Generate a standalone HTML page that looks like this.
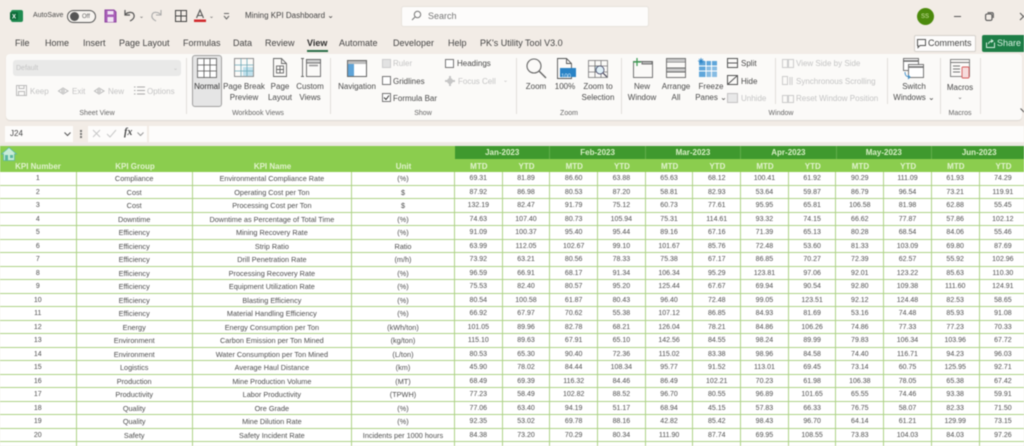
<!DOCTYPE html>
<html lang="en"><head><meta charset="utf-8"><title>Mining KPI Dashboard</title>
<style>
*{box-sizing:border-box}
html,body{margin:0;padding:0;width:1024px;height:446px;overflow:hidden;background:#f2ece6}
#w{position:relative;width:1024px;height:446px;overflow:hidden;font-family:"Liberation Sans",sans-serif;color:#444;filter:blur(.45px)}
.t{position:absolute;white-space:nowrap;line-height:10px;font-size:8px;color:#4a4a4a}
.c{transform:translateX(-50%);text-align:center}
.tab{font-size:9px;top:38px;color:#444}
.g{color:#c4c4c4}
.l{font-size:7px;color:#666;top:109px}
.b{position:absolute}
svg{position:absolute;overflow:visible}
#grid{position:absolute;left:0;top:172px;width:1028px;display:grid;grid-template-columns:76.6px 116.2px 159.2px 103px repeat(12,47.7px);grid-auto-rows:13.53px;font-size:7px;color:#4d4d4d;background:#fff}
#grid div{border-right:1px solid #aed387;border-bottom:1px solid #aed387;text-align:center;line-height:14px;white-space:nowrap;overflow:hidden}
#grid div.n{font-size:7.3px}
#hd{position:absolute;left:0;top:146px;width:1024px;height:26px;background:#8bcd4e}
.m{position:absolute;top:146px;height:13px;background:#3f992e;color:#d9efc6;font-size:8px;font-weight:bold;line-height:14px;text-align:center;width:95.4px;border-right:1px solid #62ad4b}
.h{position:absolute;top:159px;height:13px;color:#e2f3cf;font-size:8px;font-weight:bold;line-height:15px;text-align:center}
</style></head><body><div id="w">

<!-- Title bar -->
<svg style="left:10px;top:9px" width="14" height="14" viewBox="0 0 14 14"><rect x="1" y="1" width="12" height="12" rx="2" fill="#1f8a50"/><rect x="0" y="3" width="8" height="8" rx="1" fill="#0d6b38"/><text x="2" y="9.500" font-size="6" font-weight="bold" fill="#fff" font-family="Liberation Sans">X</text></svg>
<span class="t" style="left:33px;top:11px;font-size:7px">AutoSave</span>
<div class="b" style="left:67px;top:10px;width:29px;height:13px;border:1px solid #555;border-radius:7px;background:#f7f4f0"></div>
<div class="b" style="left:70px;top:12px;width:9px;height:9px;border-radius:50%;background:#555"></div>
<span class="t" style="left:82px;top:12px;font-size:6px;color:#666">Off</span>
<svg style="left:104px;top:9px" width="13" height="14" viewBox="0 0 13 14"><path d="M1 1h9l2 2v10H1z" fill="#a960b8" stroke="#8e46a0"/><rect x="3.500" y="2" width="6" height="3.500" fill="#f0e4f3"/><rect x="3.500" y="8" width="6" height="5" fill="#f0e4f3"/></svg>
<svg style="left:123px;top:9px" width="14" height="13" viewBox="0 0 14 13" fill="none" stroke="#555" stroke-width="1.200"><path d="M2 1v5h5M2 6c2-3 8-4 9 0 .8 3-2 5-4 6"/></svg>
<span class="t" style="left:139px;top:12px;font-size:6px;color:#666">⌄</span>
<svg style="left:149px;top:9px" width="14" height="13" viewBox="0 0 14 13" fill="none" stroke="#aaa" stroke-width="1.100"><path d="M12 1v5H7M12 6c-2-3-8-4-9 0-.8 3 2 5 4 6"/></svg>
<svg style="left:175px;top:10px" width="12" height="12" viewBox="0 0 12 12" fill="none" stroke="#444" stroke-width="1"><rect x=".5" y=".5" width="11" height="11"/><path d="M6 .5v11M.5 6h11"/></svg>
<svg style="left:194px;top:9px" width="12" height="13" viewBox="0 0 12 13"><path d="M2.500 9L6 1l3.500 8M4 6.500h4" fill="none" stroke="#555" stroke-width="1.100"/><rect x="0" y="10.500" width="12" height="2.500" fill="#d0282c"/></svg>
<span class="t" style="left:209px;top:12px;font-size:6px;color:#666">⌄</span>
<svg style="left:223px;top:13px" width="7" height="7" viewBox="0 0 7 7" fill="none" stroke="#666"><path d="M1 .5h5M1 3l2.500 3L6 3"/></svg>
<span class="t" style="left:245px;top:11px;font-size:8px;color:#444">Mining KPI Dashboard ⌄</span>
<div class="b" style="left:401px;top:6px;width:248px;height:21px;background:#fdfcfb;border:1px solid #e7e2dc;border-radius:3px"></div>
<svg style="left:411px;top:10px" width="11" height="11" viewBox="0 0 11 11" fill="none" stroke="#777"><circle cx="6.500" cy="4.500" r="3.200"/><path d="M4 7L1 10"/></svg>
<span class="t" style="left:428px;top:11px;font-size:9px;color:#777">Search</span>
<div class="b" style="left:917px;top:8px;width:17px;height:17px;border-radius:50%;background:#4c8a0c"></div>
<span class="t c" style="left:925px;top:12px;font-size:6px;color:#cfe6a8">SS</span>
<div class="b" style="left:954px;top:16px;width:7px;height:1px;background:#555"></div>
<svg style="left:985px;top:12px" width="9" height="9" viewBox="0 0 9 9" fill="none" stroke="#555" stroke-width="1.100"><rect x=".6" y="2" width="6.400" height="6.400" rx="1.500"/><path d="M2.500.7h4.500a1.500 1.500 0 0 1 1.300 1.300V6"/></svg>
<svg style="left:1019px;top:12px" width="9" height="9" viewBox="0 0 9 9" stroke="#555"><path d="M1 1l7 7M8 1L1 8"/></svg>

<!-- Tabs -->
<span class="t tab" style="left:15px">File</span>
<span class="t tab" style="left:45px">Home</span>
<span class="t tab" style="left:83px">Insert</span>
<span class="t tab" style="left:119px">Page Layout</span>
<span class="t tab" style="left:183px">Formulas</span>
<span class="t tab" style="left:233px">Data</span>
<span class="t tab" style="left:265px">Review</span>
<span class="t tab" style="left:307px;font-weight:bold;color:#2f2f2f">View</span>
<span class="t tab" style="left:339px">Automate</span>
<span class="t tab" style="left:393px">Developer</span>
<span class="t tab" style="left:448px">Help</span>
<span class="t tab" style="left:480px">PK's Utility Tool V3.0</span>
<div class="b" style="left:307px;top:50px;width:21px;height:2px;background:#2a6e48"></div>
<div class="b" style="left:914px;top:35px;width:62px;height:17px;background:#fdfcfb;border:1px solid #d4d0cb;border-radius:2px"></div>
<svg style="left:917px;top:39px" width="9" height="9" viewBox="0 0 9 9" fill="none" stroke="#555"><path d="M.5.500h8v6H3L1 8.500V6.500H.5z"/></svg>
<span class="t" style="left:928px;top:38px;font-size:9px;color:#444">Comments</span>
<div class="b" style="left:982px;top:35px;width:44px;height:17px;background:#1d7d46;border-radius:2px"></div>
<span class="t" style="left:997px;top:38px;font-size:9px;color:#d7efe0">Share</span>
<svg style="left:986px;top:39px" width="9" height="9" viewBox="0 0 9 9" fill="none" stroke="#d7efe0"><path d="M.5 3.500v5h8v-5M2.500 5c0-2 2-3 4-3M5 .5l2 1.500-2 1.500"/></svg>

<!-- Ribbon -->
<div class="b" style="left:6px;top:54px;width:1016px;height:66px;background:#fbfaf8;border-radius:4px;box-shadow:0 1px 1px #ddd8d2"></div>
<div class="b" style="left:13px;top:60px;width:168px;height:16px;background:#e9e9e8;border-radius:3px"></div>
<span class="t g" style="left:16px;top:64px;font-size:7px">Default</span>
<span class="t g" style="left:173px;top:64px;font-size:6px">⌄</span>
<svg style="left:16px;top:85px" width="11" height="11" viewBox="0 0 11 11" fill="none" stroke="#bbb"><rect x=".5" y=".5" width="10" height="10"/><path d="M3 .5v3h5v-3M2.500 10.500v-4h6v4"/></svg>
<span class="t g" style="left:30px;top:87px">Keep</span>
<svg style="left:58px;top:87px" width="11" height="8" viewBox="0 0 11 8" fill="none" stroke="#bbb"><path d="M.5 4L5 1l5 3-5 3z"/><circle cx="5" cy="4" r="1.200"/></svg>
<span class="t g" style="left:72px;top:87px">Exit</span>
<svg style="left:94px;top:87px" width="11" height="8" viewBox="0 0 11 8" fill="none" stroke="#bbb"><path d="M.5 4L5 1l5 3-5 3z"/><circle cx="5" cy="4" r="1.200"/></svg>
<span class="t g" style="left:108px;top:87px">New</span>
<svg style="left:134px;top:86px" width="11" height="9" viewBox="0 0 11 9" stroke="#aaa"><path d="M0 1h1.500M0 4.500h1.500M0 8h1.500M3 1h8M3 4.500h8M3 8h8"/></svg>
<span class="t g" style="left:147px;top:87px">Options</span>
<span class="t c l" style="left:97px">Sheet View</span>
<div class="b" style="left:186px;top:58px;width:1px;height:56px;background:#e2dfdb"></div>

<div class="b" style="left:192px;top:55px;width:30px;height:52px;background:#e5e5e5;border:1px solid #a0a0a0;border-radius:3px"></div>
<svg style="left:197px;top:58px" width="20" height="20" viewBox="0 0 20 20" fill="#fff" stroke="#555" stroke-width=".8"><rect x=".5" y=".5" width="19" height="19"/><path d="M.5 7h19M.5 13h19M7 .5v19M13 .5v19" fill="none"/></svg>
<span class="t c" style="left:207px;top:82px;color:#333">Normal</span>
<svg style="left:234px;top:58px" width="20" height="19" viewBox="0 0 20 19" fill="none" stroke="#777" stroke-width=".8"><rect x=".5" y=".5" width="19" height="18"/><rect x="9" y="9" width="10" height="9" fill="#bfe0ec" stroke="none"/><path d="M.5 7h19M.5 13h19M7 .5v18M13 .5v18" stroke="#6ea9b7"/></svg>
<span class="t c" style="left:244px;top:82px">Page Break</span><span class="t c" style="left:244px;top:93px">Preview</span>
<svg style="left:273px;top:58px" width="14" height="19" viewBox="0 0 14 19" fill="none" stroke="#666" stroke-width=".9"><path d="M.5.500h8l5 5v13H.5zM8.500.5v5h5"/><rect x="3.500" y="8" width="7" height="7"/><path d="M3.500 11.500h7M7 8v7"/></svg>
<span class="t c" style="left:280px;top:82px">Page</span><span class="t c" style="left:280px;top:93px">Layout</span>
<svg style="left:301px;top:58px" width="20" height="19" viewBox="0 0 20 19" fill="none" stroke="#666" stroke-width=".9"><path d="M0 .5h3M1.500.5v18M0 18.500h3"/><rect x="5.500" y="1.500" width="14" height="17"/><rect x="5.500" y="1.500" width="14" height="3.500" fill="#cfcfcf"/><path d="M8 7.500h9" stroke="#999" stroke-width="1.600"/></svg>
<span class="t c" style="left:310px;top:82px">Custom</span><span class="t c" style="left:310px;top:93px">Views</span>
<span class="t c l" style="left:258px">Workbook Views</span>
<div class="b" style="left:330px;top:58px;width:1px;height:56px;background:#e2dfdb"></div>

<svg style="left:347px;top:60px" width="20" height="17" viewBox="0 0 20 17"><rect x=".5" y=".5" width="19" height="16" fill="#fff" stroke="#666"/><rect x="1" y="1" width="18" height="3" fill="#bdbdbd"/><rect x="1" y="4" width="6" height="12" fill="#5fa4d8"/></svg>
<span class="t c" style="left:357px;top:82px">Navigation</span>
<div class="b" style="left:382px;top:59px;width:9px;height:9px;background:#e2e2e2;border:1px solid #ccc"></div>
<span class="t g" style="left:393px;top:59px">Ruler</span>
<div class="b" style="left:382px;top:76px;width:9px;height:9px;background:#fff;border:1px solid #777"></div>
<span class="t" style="left:393px;top:77px">Gridlines</span>
<div class="b" style="left:382px;top:93px;width:9px;height:9px;background:#fff;border:1px solid #777"></div>
<svg style="left:383px;top:94px" width="7" height="7" viewBox="0 0 7 7" fill="none" stroke="#333"><path d="M1 3.500l2 2 3-4"/></svg>
<span class="t" style="left:393px;top:94px">Formula Bar</span>
<div class="b" style="left:445px;top:59px;width:9px;height:9px;background:#fff;border:1px solid #777"></div>
<span class="t" style="left:457px;top:59px">Headings</span>
<svg style="left:445px;top:76px" width="10" height="10" viewBox="0 0 10 10" fill="#c6c6c6"><circle cx="5" cy="5" r="3"/><rect x="4" width="2" height="10"/><rect y="4" width="10" height="2"/></svg>
<span class="t g" style="left:458px;top:77px">Focus Cell</span>
<span class="t g" style="left:503px;top:76px;font-size:6px">⌄</span>
<span class="t c l" style="left:423px">Show</span>
<div class="b" style="left:516px;top:58px;width:1px;height:56px;background:#e2dfdb"></div>

<svg style="left:526px;top:58px" width="21" height="21" viewBox="0 0 21 21" fill="none" stroke="#666" stroke-width="1.100"><circle cx="8" cy="8" r="7"/><path d="M13 13l7 7" stroke-width="1.400"/></svg>
<span class="t c" style="left:536px;top:82px">Zoom</span>
<svg style="left:557px;top:58px" width="19" height="21" viewBox="0 0 19 21" fill="none" stroke="#555" stroke-width=".9"><path d="M.5.500h9l5 5v15H.5zM9.500.5v5h5"/><rect x="3" y="10" width="16" height="9" fill="#2a83c5" stroke="none"/></svg>
<span class="t" style="left:561px;top:72px;font-size:6px;color:#d6ebfa">100</span>
<span class="t c" style="left:565px;top:82px">100%</span>
<svg style="left:588px;top:60px" width="20" height="18" viewBox="0 0 20 18" fill="none" stroke="#777" stroke-width=".8"><rect x=".5" y=".5" width="19" height="17"/><path d="M.5 6h19M.5 12h19M7 .5v17M13 .5v17"/><rect x="7" y="6" width="6" height="6" fill="#bfe0ec"/><circle cx="12" cy="10" r="4" stroke="#446" fill="#dff0f7"/><path d="M15 13l4 4" stroke="#445" stroke-width="1.200"/></svg>
<span class="t c" style="left:598px;top:82px">Zoom to</span><span class="t c" style="left:598px;top:93px">Selection</span>
<span class="t c l" style="left:569px">Zoom</span>
<div class="b" style="left:621px;top:58px;width:1px;height:56px;background:#e2dfdb"></div>

<svg style="left:632px;top:58px" width="21" height="20" viewBox="0 0 21 20" fill="none" stroke="#666" stroke-width=".9"><rect x="1.500" y="3.500" width="19" height="16"/><rect x="10" y="3.500" width="10" height="2.500" fill="#bbb"/><path d="M5 0v8M1 4h8" stroke="#3a9a50" stroke-width="1.200"/></svg>
<span class="t c" style="left:642px;top:82px">New</span><span class="t c" style="left:642px;top:93px">Window</span>
<svg style="left:666px;top:58px" width="20" height="20" viewBox="0 0 20 20" fill="none" stroke="#666" stroke-width=".9"><rect x=".5" y=".5" width="19" height="19"/><path d="M.5 4h19M.5 10h19M.5 14h19"/><rect x="1" y="1" width="18" height="3" fill="#c8c8c8" stroke="none"/><rect x="1" y="10.500" width="18" height="3" fill="#c8c8c8" stroke="none"/></svg>
<span class="t c" style="left:676px;top:82px">Arrange</span><span class="t c" style="left:676px;top:93px">All</span>
<svg style="left:698px;top:58px" width="20" height="20" viewBox="0 0 20 20"><rect x="1" y="3" width="18" height="16" fill="#5fa6da"/><path d="M1 8h18M1 13h18M8 3v16M13.500 3v16" stroke="#fff"/><rect x="8" y="8" width="11" height="11" fill="#fff" opacity=".25"/><path d="M3 0v6M0 3h6M1 1l4 4M5 1L1 5" stroke="#2a83c5" stroke-width=".8"/></svg>
<span class="t c" style="left:711px;top:82px">Freeze</span><span class="t c" style="left:711px;top:93px">Panes ⌄</span>
<svg style="left:727px;top:58px" width="11" height="10" viewBox="0 0 11 10" fill="none" stroke="#555"><rect x=".5" y=".5" width="10" height="9"/><path d="M.5 5h10"/></svg>
<span class="t" style="left:741px;top:59px">Split</span>
<svg style="left:727px;top:75px" width="11" height="10" viewBox="0 0 11 10" fill="none" stroke="#555"><rect x=".5" y=".5" width="10" height="9"/><path d="M.5 9.500l10-9"/></svg>
<span class="t" style="left:741px;top:77px">Hide</span>
<div class="b" style="left:727px;top:93px;width:11px;height:10px;background:#e8e8e8;border:1px solid #c4c4c4"></div>
<span class="t g" style="left:741px;top:94px">Unhide</span>
<div class="b" style="left:775px;top:58px;width:1px;height:46px;background:#e2dfdb"></div>
<svg style="left:782px;top:59px" width="12" height="9" viewBox="0 0 12 9" fill="none" stroke="#ccc"><rect x=".5" y=".5" width="5" height="8"/><rect x="6.500" y=".5" width="5" height="8"/></svg>
<span class="t g" style="left:796px;top:59px">View Side by Side</span>
<svg style="left:782px;top:76px" width="12" height="10" viewBox="0 0 12 10" fill="none" stroke="#ccc"><rect x=".5" y=".5" width="5" height="8"/><path d="M8 1v8M10 1v8"/></svg>
<span class="t g" style="left:796px;top:77px">Synchronous Scrolling</span>
<svg style="left:782px;top:93px" width="12" height="10" viewBox="0 0 12 10" fill="none" stroke="#ccc"><rect x=".5" y="2.500" width="5" height="7"/><rect x="6.500" y="2.500" width="5" height="7"/></svg>
<span class="t g" style="left:796px;top:94px">Reset Window Position</span>
<span class="t c l" style="left:781px">Window</span>
<div class="b" style="left:887px;top:58px;width:1px;height:46px;background:#e2dfdb"></div>
<svg style="left:903px;top:58px" width="21" height="21" viewBox="0 0 21 21" fill="none" stroke="#666" stroke-width=".9"><rect x=".5" y=".5" width="15" height="12" fill="#fff"/><rect x="5.500" y="6.500" width="15" height="13" fill="#fff"/><path d="M.5 3h15M5.500 9h15" stroke-width="1.400"/><path d="M2 14c0 4 2 5 5 5M5 17l2 2-2 2" stroke="#3f8fc9"/></svg>
<span class="t c" style="left:914px;top:82px">Switch</span><span class="t c" style="left:914px;top:93px">Windows ⌄</span>
<div class="b" style="left:940px;top:58px;width:1px;height:56px;background:#e2dfdb"></div>
<svg style="left:950px;top:59px" width="21" height="21" viewBox="0 0 21 21" fill="none" stroke="#777" stroke-width=".9"><rect x=".5" y=".5" width="19" height="17"/><path d="M.5 3.500h19M3 7h7M3 10h7M3 13h7"/><rect x="12" y="8" width="7" height="11" rx="1" stroke="#d65a5a" fill="#f6dcdc"/></svg>
<span class="t c" style="left:960px;top:83px">Macros</span>
<span class="t c" style="left:960px;top:93px;font-size:6px;color:#666">⌄</span>
<span class="t c l" style="left:960px">Macros</span>
<div class="b" style="left:980px;top:58px;width:1px;height:56px;background:#e2dfdb"></div>
<svg style="left:1020px;top:108px" width="8" height="5" viewBox="0 0 8 5" fill="none" stroke="#555"><path d="M.5.500L4 4 7.500.5"/></svg>

<!-- Formula bar -->
<div class="b" style="left:5px;top:126px;width:68px;height:16px;background:#fdfcfb"></div>
<span class="t" style="left:10px;top:129px;color:#444">J24</span>
<svg style="left:64px;top:132px" width="7" height="4" viewBox="0 0 7 4" fill="none" stroke="#555"><path d="M.5.500L3.500 3.500 6.500.5"/></svg>
<div class="b" style="left:80px;top:130px;width:1px;height:8px;border-left:2px dotted #777"></div>
<div class="b" style="left:88px;top:126px;width:59px;height:16px;background:#fdfcfb"></div>
<svg style="left:92px;top:129px" width="9" height="9" viewBox="0 0 9 9" stroke="#c8c8c8"><path d="M1 1l7 7M8 1L1 8"/></svg>
<svg style="left:106px;top:129px" width="11" height="9" viewBox="0 0 11 9" fill="none" stroke="#c8c8c8"><path d="M1 5l3 3 6-7"/></svg>
<span class="t" style="left:124px;top:128px;font-family:'Liberation Serif',serif;font-style:italic;font-weight:bold;font-size:10px;color:#444">fx</span>
<svg style="left:137px;top:132px" width="7" height="4" viewBox="0 0 7 4" fill="none" stroke="#999"><path d="M.5.500L3.500 3.500 6.500.5"/></svg>
<div class="b" style="left:149px;top:126px;width:875px;height:16px;background:#fdfcfb"></div>

<!-- Sheet header -->
<div class="b" style="left:0;top:143px;width:1024px;height:3px;background:#ece8e3"></div>
<div id="hd"></div>
<svg style="left:1px;top:147px" width="16" height="14" viewBox="0 0 16 14"><path d="M8 .5L.5 7h2v6.500h11V7h2z" fill="#c8ecd8" stroke="#5ab7a0" stroke-width=".8"/><rect x="4" y="8" width="3" height="5.500" fill="#5ab7a0"/><rect x="9" y="8" width="3" height="3" fill="#5ab7a0"/></svg>
<span class="h" style="left:0;width:76px">KPI Number</span>
<span class="h" style="left:77px;width:116px">KPI Group</span>
<span class="h" style="left:193px;width:159px">KPI Name</span>
<span class="h" style="left:352px;width:103px">Unit</span>
<div class="m" style="left:455px">Jan-2023</div><div class="m" style="left:550.400px">Feb-2023</div><div class="m" style="left:645.800px">Mar-2023</div><div class="m" style="left:741.200px">Apr-2023</div><div class="m" style="left:836.600px">May-2023</div><div class="m" style="left:932px">Jun-2023</div>
<span class="h" style="left:455px;width:47.700px">MTD</span><span class="h" style="left:502.700px;width:47.700px">YTD</span>
<span class="h" style="left:550.400px;width:47.700px">MTD</span><span class="h" style="left:598.100px;width:47.700px">YTD</span>
<span class="h" style="left:645.800px;width:47.700px">MTD</span><span class="h" style="left:693.500px;width:47.700px">YTD</span>
<span class="h" style="left:741.200px;width:47.700px">MTD</span><span class="h" style="left:788.900px;width:47.700px">YTD</span>
<span class="h" style="left:836.600px;width:47.700px">MTD</span><span class="h" style="left:884.300px;width:47.700px">YTD</span>
<span class="h" style="left:932px;width:47.700px">MTD</span><span class="h" style="left:979.700px;width:47.700px">YTD</span>

<div id="grid">
<div>1</div><div class="n">Compliance</div><div class="n">Environmental Compliance Rate</div><div class="n">(%)</div><div>69.31</div><div>81.89</div><div>86.60</div><div>63.88</div><div>65.63</div><div>68.12</div><div>100.41</div><div>61.92</div><div>90.29</div><div>111.09</div><div>61.93</div><div>74.29</div>
<div>2</div><div class="n">Cost</div><div class="n">Operating Cost per Ton</div><div class="n">$</div><div>87.92</div><div>86.98</div><div>80.53</div><div>87.20</div><div>58.81</div><div>82.93</div><div>53.64</div><div>59.87</div><div>86.79</div><div>96.54</div><div>73.21</div><div>119.91</div>
<div>3</div><div class="n">Cost</div><div class="n">Processing Cost per Ton</div><div class="n">$</div><div>132.19</div><div>82.47</div><div>91.79</div><div>75.12</div><div>60.73</div><div>77.61</div><div>95.95</div><div>65.81</div><div>106.58</div><div>81.98</div><div>62.88</div><div>55.45</div>
<div>4</div><div class="n">Downtime</div><div class="n">Downtime as Percentage of Total Time</div><div class="n">(%)</div><div>74.63</div><div>107.40</div><div>80.73</div><div>105.94</div><div>75.31</div><div>114.61</div><div>93.32</div><div>74.15</div><div>66.62</div><div>77.87</div><div>57.86</div><div>102.12</div>
<div>5</div><div class="n">Efficiency</div><div class="n">Mining Recovery Rate</div><div class="n">(%)</div><div>91.09</div><div>100.37</div><div>95.40</div><div>95.44</div><div>89.16</div><div>67.16</div><div>71.39</div><div>65.13</div><div>80.28</div><div>68.54</div><div>84.06</div><div>55.46</div>
<div>6</div><div class="n">Efficiency</div><div class="n">Strip Ratio</div><div class="n">Ratio</div><div>63.99</div><div>112.05</div><div>102.67</div><div>99.10</div><div>101.67</div><div>85.76</div><div>72.48</div><div>53.60</div><div>81.33</div><div>103.09</div><div>69.80</div><div>87.69</div>
<div>7</div><div class="n">Efficiency</div><div class="n">Drill Penetration Rate</div><div class="n">(m/h)</div><div>73.92</div><div>63.21</div><div>80.56</div><div>78.33</div><div>75.38</div><div>67.17</div><div>86.85</div><div>70.27</div><div>72.39</div><div>62.57</div><div>55.92</div><div>102.96</div>
<div>8</div><div class="n">Efficiency</div><div class="n">Processing Recovery Rate</div><div class="n">(%)</div><div>96.59</div><div>66.91</div><div>68.17</div><div>91.34</div><div>106.34</div><div>95.29</div><div>123.81</div><div>97.06</div><div>92.01</div><div>123.22</div><div>85.63</div><div>110.30</div>
<div>9</div><div class="n">Efficiency</div><div class="n">Equipment Utilization Rate</div><div class="n">(%)</div><div>75.53</div><div>82.40</div><div>80.57</div><div>95.20</div><div>125.44</div><div>67.67</div><div>69.94</div><div>90.54</div><div>92.80</div><div>109.38</div><div>111.60</div><div>124.91</div>
<div>10</div><div class="n">Efficiency</div><div class="n">Blasting Efficiency</div><div class="n">(%)</div><div>80.54</div><div>100.58</div><div>61.87</div><div>80.43</div><div>96.40</div><div>72.48</div><div>99.05</div><div>123.51</div><div>92.12</div><div>124.48</div><div>82.53</div><div>58.65</div>
<div>11</div><div class="n">Efficiency</div><div class="n">Material Handling Efficiency</div><div class="n">(%)</div><div>66.92</div><div>67.97</div><div>70.62</div><div>55.38</div><div>107.12</div><div>86.85</div><div>84.93</div><div>81.69</div><div>53.16</div><div>74.48</div><div>85.93</div><div>91.08</div>
<div>12</div><div class="n">Energy</div><div class="n">Energy Consumption per Ton</div><div class="n">(kWh/ton)</div><div>101.05</div><div>89.96</div><div>82.78</div><div>68.21</div><div>126.04</div><div>78.21</div><div>84.86</div><div>106.26</div><div>74.86</div><div>77.33</div><div>77.23</div><div>70.33</div>
<div>13</div><div class="n">Environment</div><div class="n">Carbon Emission per Ton Mined</div><div class="n">(kg/ton)</div><div>115.10</div><div>89.63</div><div>67.91</div><div>65.10</div><div>142.56</div><div>84.55</div><div>98.24</div><div>89.99</div><div>79.83</div><div>106.34</div><div>103.96</div><div>67.72</div>
<div>14</div><div class="n">Environment</div><div class="n">Water Consumption per Ton Mined</div><div class="n">(L/ton)</div><div>80.53</div><div>65.30</div><div>90.40</div><div>72.36</div><div>115.02</div><div>83.38</div><div>98.96</div><div>84.58</div><div>74.40</div><div>116.71</div><div>94.23</div><div>96.03</div>
<div>15</div><div class="n">Logistics</div><div class="n">Average Haul Distance</div><div class="n">(km)</div><div>45.90</div><div>78.02</div><div>84.44</div><div>108.34</div><div>95.77</div><div>91.52</div><div>113.01</div><div>69.45</div><div>73.14</div><div>60.75</div><div>125.95</div><div>92.71</div>
<div>16</div><div class="n">Production</div><div class="n">Mine Production Volume</div><div class="n">(MT)</div><div>68.49</div><div>69.39</div><div>116.32</div><div>84.46</div><div>86.49</div><div>102.21</div><div>70.23</div><div>61.98</div><div>106.38</div><div>78.05</div><div>65.38</div><div>67.42</div>
<div>17</div><div class="n">Productivity</div><div class="n">Labor Productivity</div><div class="n">(TPWH)</div><div>77.23</div><div>58.49</div><div>102.82</div><div>88.52</div><div>96.70</div><div>80.55</div><div>96.89</div><div>101.65</div><div>65.55</div><div>74.46</div><div>93.38</div><div>59.91</div>
<div>18</div><div class="n">Quality</div><div class="n">Ore Grade</div><div class="n">(%)</div><div>77.06</div><div>63.40</div><div>94.19</div><div>51.17</div><div>68.94</div><div>45.15</div><div>57.83</div><div>66.33</div><div>76.75</div><div>58.07</div><div>82.33</div><div>71.50</div>
<div>19</div><div class="n">Quality</div><div class="n">Mine Dilution Rate</div><div class="n">(%)</div><div>92.35</div><div>53.02</div><div>69.78</div><div>88.16</div><div>42.82</div><div>85.42</div><div>98.43</div><div>96.70</div><div>64.14</div><div>61.21</div><div>129.99</div><div>73.15</div>
<div>20</div><div class="n">Safety</div><div class="n">Safety Incident Rate</div><div class="n">Incidents per 1000 hours</div><div>84.38</div><div>73.20</div><div>70.29</div><div>80.34</div><div>111.90</div><div>87.74</div><div>69.95</div><div>108.55</div><div>73.83</div><div>104.03</div><div>84.03</div><div>97.26</div>
<div></div><div></div><div></div><div></div><div></div><div></div><div></div><div></div><div></div><div></div><div></div><div></div><div></div><div></div><div></div><div></div>
</div>
</div></body></html>
